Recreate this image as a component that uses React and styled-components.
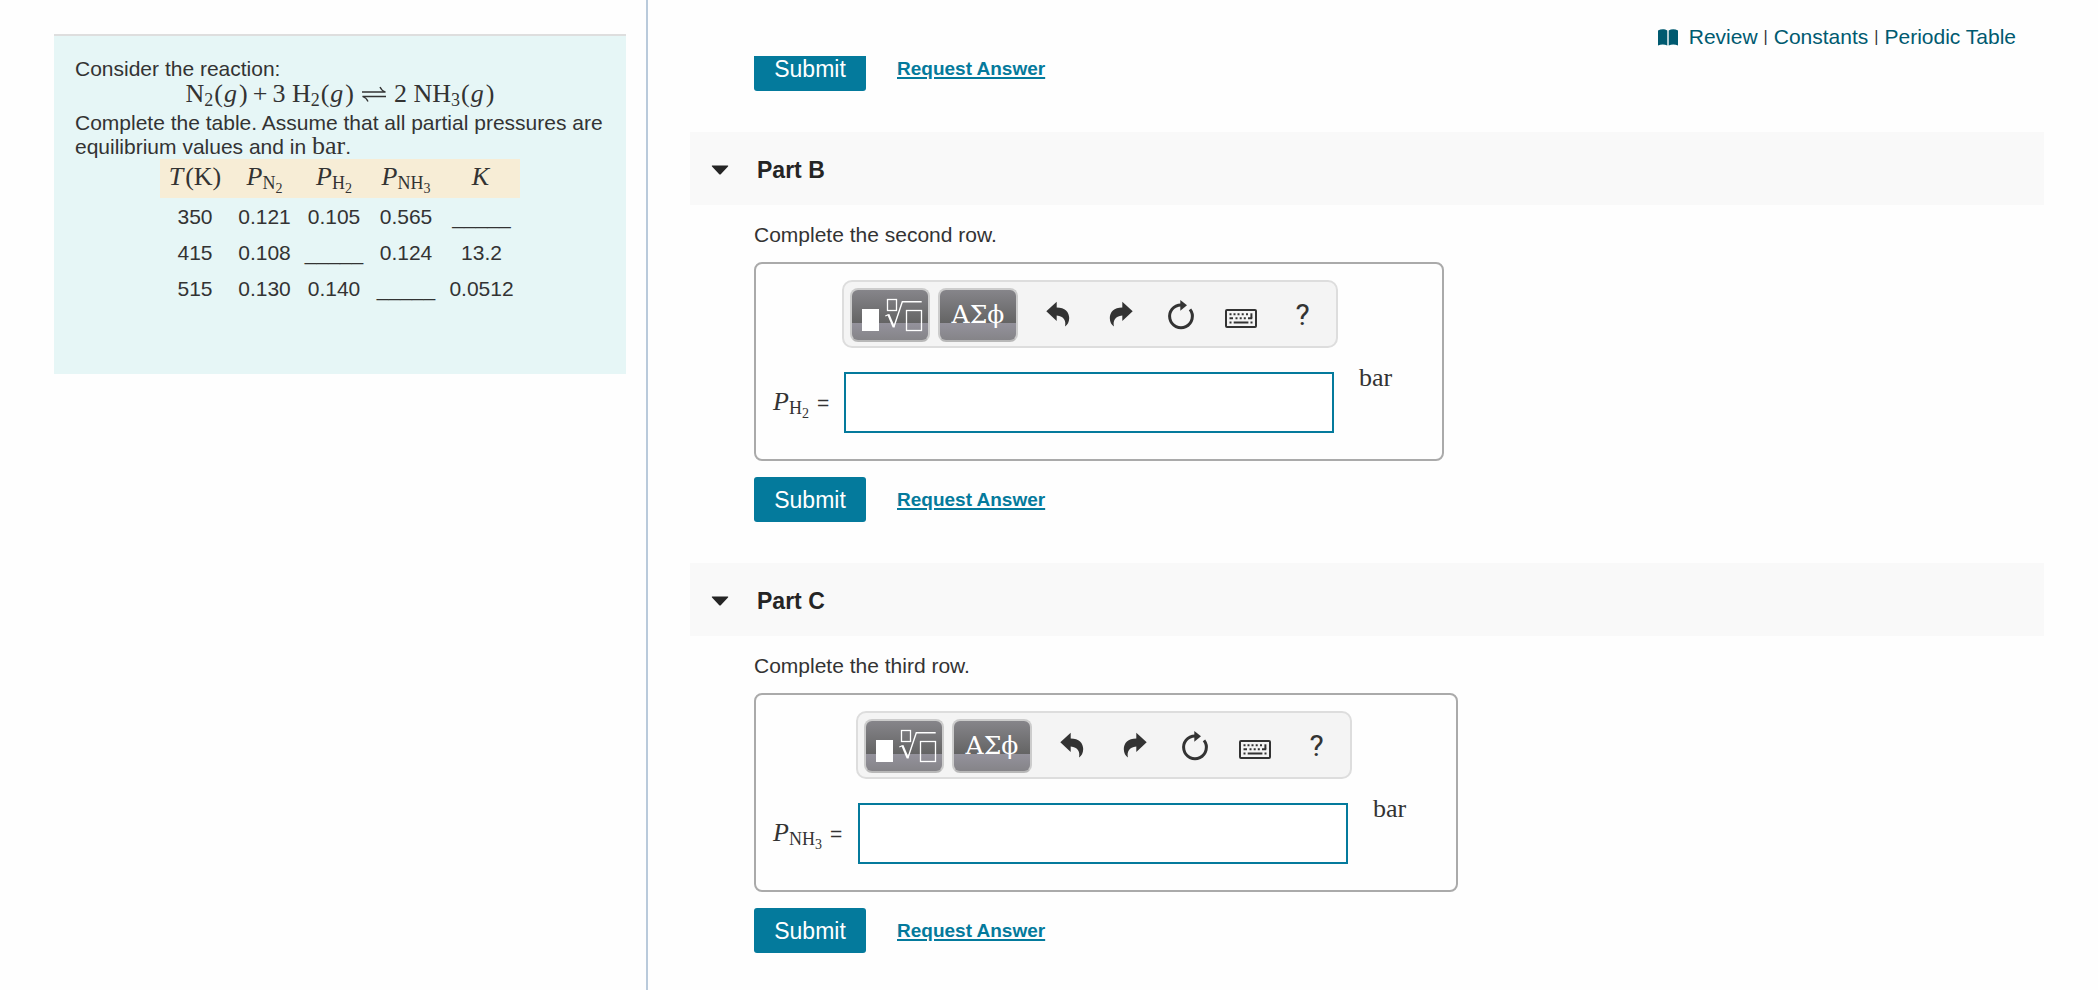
import React from "react";
import styled, { createGlobalStyle } from "styled-components";

const teal = "#047a9c";
const darkTeal = "#005a70";
const ink = "#333333";

const GlobalStyle = createGlobalStyle`
  *, *::before, *::after { box-sizing: border-box; }
  body {
    margin: 0;
    background: #fefefe;
    color: ${ink};
    font-family: "Liberation Sans", Arial, Helvetica, sans-serif;
    font-size: 21px;
    line-height: 24px;
  }
  button, input { font: inherit; color: inherit; }
`;

const Page = styled.div`
  display: flex;
  min-height: 100vh;
`;

const Sidebar = styled.aside`
  flex: 0 0 648px;
  padding: 34px 20px 34px 54px;
  border-right: 2px solid #b9cadb;
`;

const Problem = styled.section`
  min-height: 340px;
  padding: 21px 21px 40px;
  background: #e6f6f6;
  border-top: 2px solid #dedede;

  p { margin: 0; }
`;

const Tex = styled.span`
  font-family: "Liberation Serif", "Times New Roman", serif;
  font-size: 26px;
  line-height: 0;
  white-space: nowrap;
`;

const Equation = styled.div`
  height: 30px;
  line-height: 26px;
  text-align: center;

  ${Tex} { line-height: 26px; }
`;

const Var = styled.i`
  margin-right: ${(p) => (p.$tight ? 0 : 2)}px;
`;

const Sub = styled.span`
  font-size: 18px;
  line-height: 0;
  vertical-align: -4px;
`;

const SubSub = styled.span`
  font-size: 14px;
  line-height: 0;
  vertical-align: -4px;
`;

const Op = styled.span`
  margin: 0 ${(p) => p.$gap || 5}px;
`;

const Harpoons = styled.svg`
  width: 24px;
  height: 16px;
  margin: 0 8px;
`;

const DataTable = styled.table`
  width: 360px;
  margin: 0 auto;
  border-collapse: collapse;
  table-layout: fixed;

  th, td {
    height: 36px;
    padding: 2px 0 0;
    text-align: center;
    font-weight: 400;
    white-space: nowrap;
  }
  th { height: 39px; padding: 0 0 2px; background: #f7edd6; }
`;

const Main = styled.main`
  flex: 1;
  min-width: 0;
  padding: 0 54px 36px 42px;
`;

const TopLinks = styled.nav`
  display: flex;
  justify-content: flex-end;
  align-items: center;
  gap: 6px;
  height: 56px;
  padding: 18px 28px 0 0;

  a { color: ${darkTeal}; text-decoration: none; }
  svg { margin-right: 5px; }
`;

const Pipe = styled.span`
  font-size: 16px;
`;

const Scroller = styled.div`
  overflow: hidden;
`;

const Actions = styled.div`
  display: flex;
  align-items: center;
  gap: 31px;
  margin: ${(p) => (p.$clipped ? -10 : 16)}px 0 41px 64px;
`;

const Submit = styled.button`
  width: 112px;
  height: 45px;
  padding: 0;
  border: 0;
  border-radius: 3px;
  background: ${teal};
  color: #ffffff;
  font-size: 23px;
`;

const RequestLink = styled.a`
  color: ${teal};
  font-size: 19px;
  font-weight: 700;
  text-decoration-thickness: 2px;
  text-underline-offset: 2px;
`;

const PartHeader = styled.button`
  display: flex;
  align-items: center;
  gap: 28px;
  width: 100%;
  height: 73px;
  padding: 2px 21px 0;
  border: 0;
  background: #f9f9f9;
  color: #252525;
  font-size: 23px;
  font-weight: 700;
  text-align: left;
`;

const Prompt = styled.p`
  margin: 18px 0 15px 64px;
`;

const AnswerBox = styled.div`
  display: inline-grid;
  grid-template-columns: ${(p) => p.$label}px 496px auto;
  grid-template-rows: 68px 24px 61px;
  height: 199px;
  margin-left: 64px;
  padding: 16px 50px 0 17px;
  border: 2px solid #aaaaaa;
  border-radius: 8px;
  vertical-align: top;
`;

const Toolbar = styled.div`
  grid-column: 2;
  display: flex;
  align-items: center;
  padding: 2px 0 0 6px;
  border: 2px solid #dddddd;
  border-radius: 10px;
  background: #f4f4f4;
`;

const DarkButton = styled.button`
  width: 80px;
  height: 54px;
  margin-right: 8px;
  padding: 0;
  border: 2px solid #cccccc;
  border-bottom-color: #b8b8b8;
  border-radius: 8px;
  background: linear-gradient(#86858a 0%, #646464 66%, #94929c 66%, #858488 100%);
  color: #ffffff;
  font-family: "DejaVu Serif", serif;
  font-size: 25px;
  line-height: 46px;

  svg { display: block; }
`;

const IconButton = styled.button`
  width: 61px;
  height: 54px;
  padding: 0;
  border: 0;
  background: none;
  font-family: Roboto, sans-serif;
  font-size: 30px;

  svg { display: block; }
`;

const IconGroup = styled.div`
  display: flex;
  margin-left: 2px;
`;

const FieldLabel = styled.label`
  grid-row: 3;
  align-self: center;
`;

const Equals = styled.span`
  margin-left: 8px;
`;

const Field = styled.input`
  grid-row: 3;
  width: 490px;
  margin-left: 2px;
  padding: 0 12px;
  border: 2px solid ${teal};
  border-radius: 0;
  background: #ffffff;
  outline: none;
`;

const Unit = styled.span`
  grid-column: 3;
  grid-row: 2 / span 2;
  padding: 19px 0 0 21px;
`;

const Species = ({ name, n }) => (
  <Tex>
    <Var $tight>P</Var>
    <Sub>
      {name}
      {n && <SubSub>{n}</SubSub>}
    </Sub>
  </Tex>
);

const Gas = ({ name, n }) => (
  <>
    {name}
    <Sub>{n}</Sub>
    <Op $gap={1}>(</Op>
    <Var>g</Var>)
  </>
);

const BookIcon = () => (
  <svg width="20" height="17" viewBox="0 0 20 17" fill={darkTeal} aria-hidden="true">
    <path d="M0 1.6C3-.2 6.800 0 9.300 1.500V16.500C6.500 15.200 3 15.200 0 16.500Z" />
    <path d="M20 1.600C17-.2 13.200 0 10.700 1.500V16.500C13.500 15.200 17 15.200 20 16.500Z" />
  </svg>
);

const CaretIcon = () => (
  <svg width="18" height="10" viewBox="0 0 18 10" fill="#252525" aria-hidden="true">
    <path d="M1 .5H17Q17.500 1 17 1.500L10 9Q9 10 8 9L1 1.500Q.500 1 1 .5Z" />
  </svg>
);

const RootIcon = () => (
  <svg width="76" height="50" viewBox="0 0 76 50" fill="none" stroke="#fff" aria-hidden="true">
    <rect x="10" y="19" width="17" height="22" fill="#fff" stroke="none" />
    <rect x="35.500" y="9.500" width="9" height="11" strokeWidth="1.300" />
    <path d="M33.300 26 36.700 24.500" strokeWidth="1.200" />
    <path d="M36.400 24.500 41.700 37" strokeWidth="2.200" />
    <path d="M41.700 37.500 50.300 11.700H69.700" strokeWidth="1.400" />
    <rect x="54.500" y="20.500" width="15" height="20" strokeWidth="1.300" />
  </svg>
);

const arrow =
  "M18.300 23.300 28.700 13.700V19.400C37 19.400 41.200 24 41.200 30 41.200 34 39.500 37 37 38.500 38.300 33 36 28.300 28.700 27.600V33Z";

const UndoIcon = () => (
  <svg width="61" height="54" viewBox="0 0 61 54" fill={ink} aria-hidden="true">
    <path d={arrow} />
  </svg>
);

const RedoIcon = () => (
  <svg width="61" height="54" viewBox="0 0 61 54" fill={ink} aria-hidden="true">
    <path d={arrow} transform="translate(62 0) scale(-1 1)" />
  </svg>
);

const ResetIcon = () => (
  <svg width="61" height="54" viewBox="0 0 61 54" aria-hidden="true">
    <path d="M40 21.300A11.400 11.400 0 1 1 31 16.900" fill="none" stroke={ink} strokeWidth="3" />
    <path d="M30.300 12 37 17.300 30.300 22.800Z" fill={ink} />
  </svg>
);

const KeyboardIcon = () => (
  <svg width="61" height="54" viewBox="0 0 61 54" fill="none" stroke={ink} aria-hidden="true">
    <rect x="15" y="22" width="30" height="17" rx="1" strokeWidth="2" />
    <path d="M18.500 26.300h2M22.500 26.300h2M26.500 26.300h2M30.700 26.300h2M35 26.300h2" strokeWidth="2" />
    <path d="M18.500 30.300h3.500M24.500 30.300h2M28.700 30.300h2M32.800 30.300h2M37 30.300h4.200" strokeWidth="2" />
    <path d="M40.400 25.300v5" strokeWidth="2" />
    <path d="M18.500 34.500h2M22.700 34.500h14.700M39.500 34.500h2" strokeWidth="2" />
  </svg>
);

function SubmitRow({ clipped }) {
  return (
    <Actions $clipped={clipped}>
      <Submit type="button">Submit</Submit>
      <RequestLink href="#answer">Request Answer</RequestLink>
    </Actions>
  );
}

function Part({ title, prompt, id, name, n, labelWidth }) {
  return (
    <section>
      <PartHeader type="button" aria-expanded="true">
        <CaretIcon />
        {title}
      </PartHeader>
      <Prompt>{prompt}</Prompt>
      <AnswerBox $label={labelWidth}>
        <Toolbar role="toolbar" aria-label="Equation tools">
          <DarkButton type="button" aria-label="Templates">
            <RootIcon />
          </DarkButton>
          <DarkButton type="button">ΑΣϕ</DarkButton>
          <IconGroup>
            <IconButton type="button" aria-label="Undo"><UndoIcon /></IconButton>
            <IconButton type="button" aria-label="Redo"><RedoIcon /></IconButton>
            <IconButton type="button" aria-label="Reset"><ResetIcon /></IconButton>
            <IconButton type="button" aria-label="Keyboard"><KeyboardIcon /></IconButton>
            <IconButton type="button">?</IconButton>
          </IconGroup>
        </Toolbar>
        <FieldLabel htmlFor={id}>
          <Species name={name} n={n} />
          <Equals>=</Equals>
        </FieldLabel>
        <Field id={id} type="text" />
        <Unit><Tex>bar</Tex></Unit>
      </AnswerBox>
      <SubmitRow />
    </section>
  );
}

const blank = "_____";
const rows = [
  ["350", "0.121", "0.105", "0.565", blank],
  ["415", "0.108", blank, "0.124", "13.2"],
  ["515", "0.130", "0.140", blank, "0.0512"],
];
const columns = [70, 69, 70, 74, 77];

export default function App() {
  return (
    <Page>
      <GlobalStyle />
      <Sidebar>
        <Problem>
          <p>Consider the reaction:</p>
          <Equation>
            <Tex>
              <Gas name="N" n="2" />
              <Op>+</Op>3 <Gas name="H" n="2" />
              <Harpoons viewBox="0 0 24 16" fill="none" stroke={ink} strokeWidth="1.300">
                <path d="M0 6H23.500C20.500 5 19 3.500 18 1" />
                <path d="M24 10.500H.500C3.500 11.500 5 13 6 15.500" />
              </Harpoons>
              2 <Gas name="NH" n="3" />
            </Tex>
          </Equation>
          <p>
            Complete the table. Assume that all partial pressures are equilibrium values and in{" "}
            <Tex>bar</Tex>.
          </p>
          <DataTable>
            <colgroup>
              {columns.map((w, i) => <col key={i} width={w} />)}
            </colgroup>
            <thead>
              <tr>
                <th scope="col"><Tex><Var>T</Var>(K)</Tex></th>
                <th scope="col"><Species name="N" n="2" /></th>
                <th scope="col"><Species name="H" n="2" /></th>
                <th scope="col"><Species name="NH" n="3" /></th>
                <th scope="col"><Tex><Var>K</Var></Tex></th>
              </tr>
            </thead>
            <tbody>
              {rows.map((row) => (
                <tr key={row[0]}>
                  {row.map((cell, i) => <td key={i}>{cell}</td>)}
                </tr>
              ))}
            </tbody>
          </DataTable>
        </Problem>
      </Sidebar>
      <Main>
        <TopLinks>
          <BookIcon />
          <a href="#review">Review</a>
          <Pipe>|</Pipe>
          <a href="#constants">Constants</a>
          <Pipe>|</Pipe>
          <a href="#periodic-table">Periodic Table</a>
        </TopLinks>
        <Scroller>
          <SubmitRow clipped />
          <Part title="Part B" prompt="Complete the second row." id="p-h2" name="H" n="2" labelWidth={69} />
          <Part title="Part C" prompt="Complete the third row." id="p-nh3" name="NH" n="3" labelWidth={83} />
        </Scroller>
      </Main>
    </Page>
  );
}
